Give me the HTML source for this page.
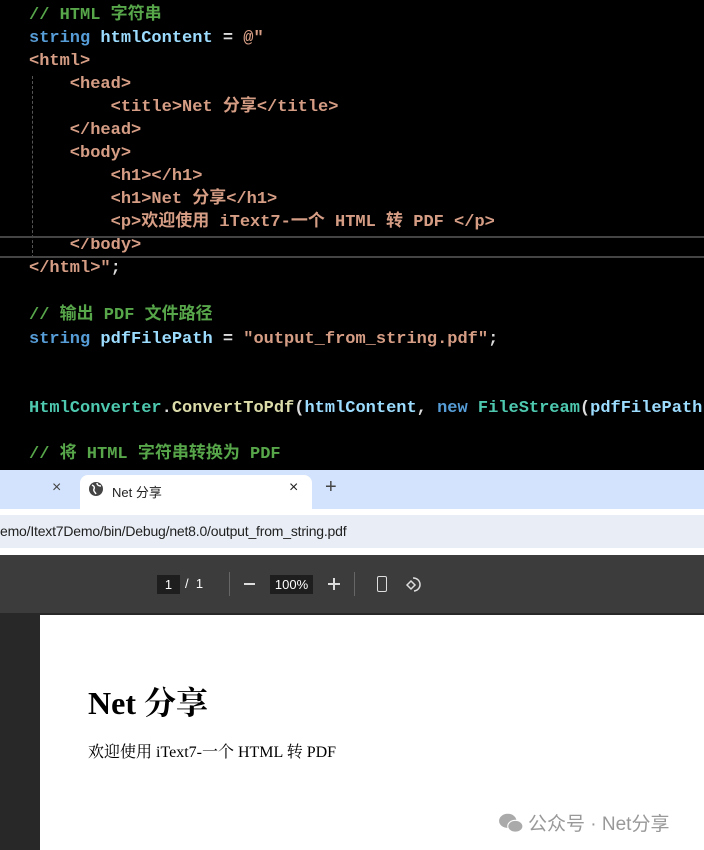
<!DOCTYPE html>
<html><head><meta charset="utf-8"><style>
*{margin:0;padding:0;box-sizing:border-box}
body{width:704px;height:850px;overflow:hidden;background:#000;position:relative;font-family:"Liberation Sans","Noto Sans CJK SC",sans-serif}
.code{position:absolute;left:0;top:0;width:704px;height:470px;background:#000;font-family:"Liberation Mono","Noto Sans CJK SC",monospace;font-size:17px;font-weight:600}
.l{position:absolute;left:29px;white-space:pre;line-height:23px;color:#d69d85}
.c{color:#57a64a}.k{color:#569cd6}.v{color:#9cdcfe}.t{color:#4ec9b0}.m{color:#dcdcaa}.w{color:#dcdcdc}
.tabs{position:absolute;top:470px;left:0;width:704px;height:39px;background:#d3e3fd}
.tab{position:absolute;left:80px;top:5px;width:232px;height:34px;background:#fff;border-radius:8px 8px 0 0}
.addr{position:absolute;top:509px;left:0;width:704px;height:46px;background:#fff}
.addrin{position:absolute;top:6px;left:0;width:704px;height:33px;background:#e9eef6;font-size:14px;color:#1f1f1f;line-height:33px;letter-spacing:-0.2px}
.tb{position:absolute;top:555px;left:0;width:704px;height:58px;background:#3c3c3c;color:#fff;font-size:13px}
.view{position:absolute;top:613px;left:0;width:704px;height:237px;background:#282828}
.page{position:absolute;left:40px;top:615px;width:664px;height:235px;background:#fff}
</style></head><body>
<div class="code">
<div class="l c" style="top:4px">// HTML 字符串</div>
<div class="l" style="top:27px"><span class="k">string</span> <span class="v">htmlContent</span> <span class="w">=</span> @"</div>
<div class="l" style="top:50px">&lt;html&gt;</div>
<div class="l" style="top:73px">    &lt;head&gt;</div>
<div class="l" style="top:96px">        &lt;title&gt;Net 分享&lt;/title&gt;</div>
<div class="l" style="top:119px">    &lt;/head&gt;</div>
<div class="l" style="top:142px">    &lt;body&gt;</div>
<div class="l" style="top:165px">        &lt;h1&gt;&lt;/h1&gt;</div>
<div class="l" style="top:188px">        &lt;h1&gt;Net 分享&lt;/h1&gt;</div>
<div class="l" style="top:211px">        &lt;p&gt;欢迎使用 iText7-一个 HTML 转 PDF &lt;/p&gt;</div>
<div class="l" style="top:234px">    &lt;/body&gt;</div>
<div class="l" style="top:257px">&lt;/html&gt;"<span class="w">;</span></div>
<div class="l c" style="top:304px">// 输出 PDF 文件路径</div>
<div class="l" style="top:328px"><span class="k">string</span> <span class="v">pdfFilePath</span> <span class="w">=</span> "output_from_string.pdf"<span class="w">;</span></div>
<div class="l" style="top:397px"><span class="t">HtmlConverter</span><span class="w">.</span><span class="m">ConvertToPdf</span><span class="w">(</span><span class="v">htmlContent</span><span class="w">,</span> <span class="k">new</span> <span class="t">FileStream</span><span class="w">(</span><span class="v">pdfFilePath</span></div>
<div class="l c" style="top:443px">// 将 HTML 字符串转换为 PDF</div>
<div style="position:absolute;left:32px;top:76px;height:182px;border-left:1px dashed #555"></div>
<div style="position:absolute;left:0;top:236px;width:704px;height:2px;background:#444"></div>
<div style="position:absolute;left:0;top:256px;width:704px;height:2px;background:#444"></div>
</div>
<div class="tabs">
<div style="position:absolute;left:52px;top:9px;font-size:16px;color:#444">×</div>
<div class="tab">
<svg style="position:absolute;left:8px;top:6px" width="16" height="16" viewBox="0 0 16 16"><circle cx="8" cy="8" r="7" fill="#444"/><path d="M4 4c2 1 3 2 2 4s1 3 2 5M9 2c0 2 2 3 4 3" stroke="#fff" stroke-width="1.5" fill="none"/></svg>
<div style="position:absolute;left:32px;top:7px;font-size:13px;color:#1f1f1f">Net 分享</div>
<div style="position:absolute;left:209px;top:4px;font-size:16px;color:#222">×</div>
</div>
<div style="position:absolute;left:325px;top:6px;font-size:20px;color:#444">+</div>
</div>
<div class="addr"><div class="addrin">emo/Itext7Demo/bin/Debug/net8.0/output_from_string.pdf</div></div>
<div class="tb">
<div style="position:absolute;left:157px;top:20px;width:23px;height:19px;background:#1e1e1e;text-align:center;line-height:19px">1</div>
<div style="position:absolute;left:185px;top:21px">/&nbsp;&nbsp;1</div>
<div style="position:absolute;left:229px;top:17px;width:1px;height:24px;background:#666"></div>
<div style="position:absolute;left:244px;top:28px;width:11px;height:2px;background:#ddd"></div>
<div style="position:absolute;left:270px;top:20px;width:43px;height:19px;background:#1e1e1e;text-align:center;line-height:19px">100%</div>
<div style="position:absolute;left:328px;top:23px;width:12px;height:2px;background:#ddd;transform:translateY(5px)"></div>
<div style="position:absolute;left:333px;top:23px;width:2px;height:12px;background:#ddd"></div>
<div style="position:absolute;left:354px;top:17px;width:1px;height:24px;background:#666"></div>
<div style="position:absolute;left:377px;top:21px;width:10px;height:16px;border:1.5px solid #ddd;border-radius:2px"></div>
<svg style="position:absolute;left:405px;top:20px" width="18" height="18" viewBox="0 0 18 18"><path d="M2 10l4-4 4 4-4 4z" stroke="#ddd" stroke-width="1.5" fill="none"/><path d="M8 3a6 6 0 1 1 1 13" stroke="#ddd" stroke-width="1.5" fill="none"/></svg>
</div>
<div class="view"></div>
<div class="page">
<div style="position:absolute;left:48px;top:63px;font-family:'Liberation Serif','Noto Serif CJK SC',serif;font-weight:bold;font-size:32px;color:#000">Net 分享</div>
<div style="position:absolute;left:48px;top:124px;font-family:'Liberation Serif','Noto Serif CJK SC',serif;font-size:16px;color:#000">欢迎使用 iText7-一个 HTML 转 PDF</div>
<svg style="position:absolute;left:458px;top:197px" width="26" height="22" viewBox="0 0 24 20"><ellipse cx="9" cy="8" rx="8" ry="6.5" fill="#aaa"/><ellipse cx="16" cy="13" rx="7" ry="5.5" fill="#aaa" stroke="#fff" stroke-width="1"/></svg>
<div style="position:absolute;left:488px;top:194px;font-size:19px;color:#999">公众号 · Net分享</div>
</div>
</body></html>
